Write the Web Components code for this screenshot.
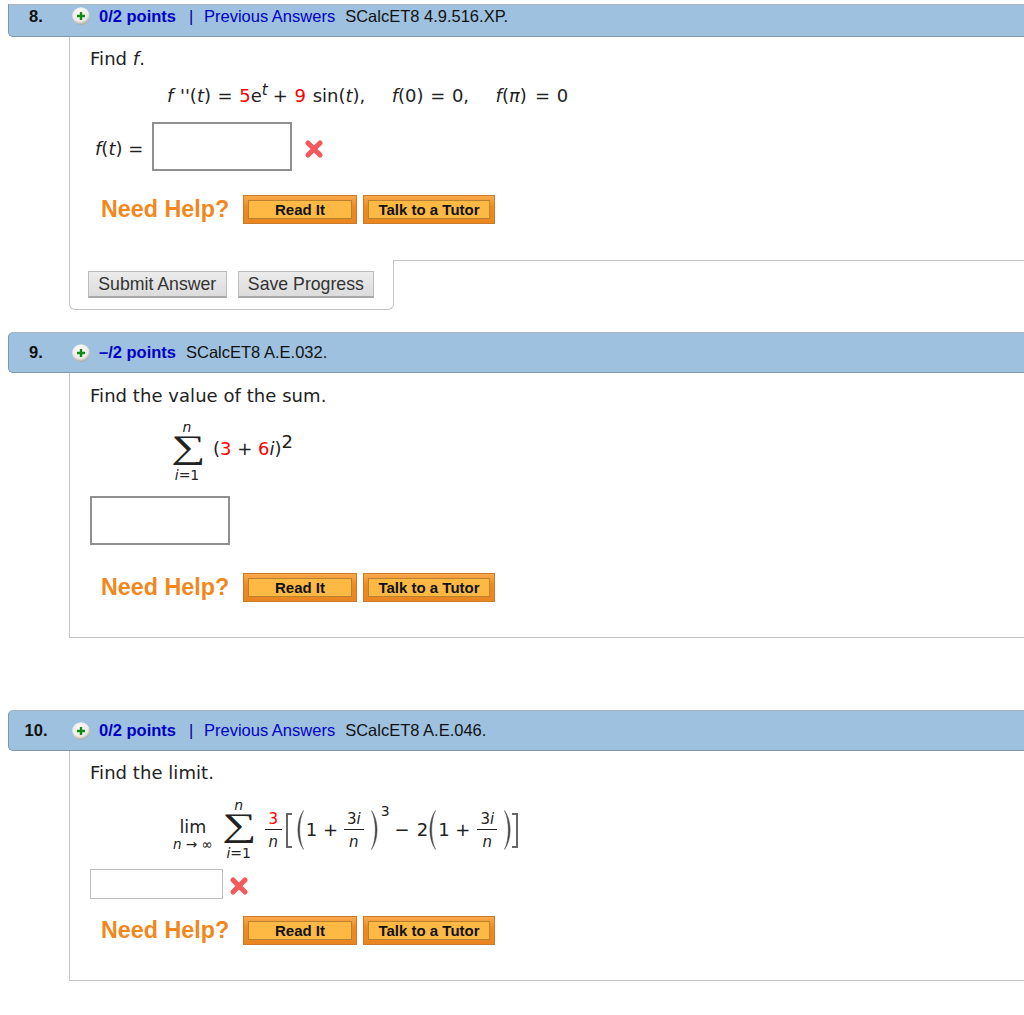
<!DOCTYPE html>
<html>
<head>
<meta charset="utf-8">
<title>Questions</title>
<style>
  html, body { margin: 0; padding: 0; background: #fff; overflow: hidden; }
  body { width: 1024px; height: 1015px; padding-top: 4px; box-sizing: border-box; font-family: "DejaVu Sans", Verdana, sans-serif; font-size: 18px; color: #222; }
  i { font-style: italic; }
  .red { color: #f00; }
  .row { display: flex; align-items: center; }
  .find { height: 22px; line-height: 22px; letter-spacing: .05px; }
  sup { line-height: 0; }
</style>
</head>
<body>

<question-block num="8." points="0/2 points" prev book="SCalcET8 4.9.516.XP." head="33" body-height="223" notch>
  <div class="find" style="margin-top:11px">Find <i>f</i>.</div>
  <div style="margin:15px 0 0 77px;height:22px;line-height:22px;white-space:nowrap;word-spacing:.9px"><i>f</i>&nbsp;''(<i>t</i>) = <span class="red">5</span>e<sup style="font-size:15px;font-style:italic;margin-right:-1.5px">t</sup>&nbsp;+ <span class="red">9</span> sin(<i>t</i>),&nbsp;&nbsp;&nbsp; <i>f</i>(0) = 0,&nbsp;&nbsp;&nbsp; <i>f</i>(<i>π</i>)<span style="margin-left:1.5px"> = 0</span></div>
  <div class="row" style="margin:15px 0 0 5px">
    <span style="width:57px;margin-top:3px;white-space:nowrap"><i>f</i>(<i>t</i>) =</span>
    <answer-box w="140" h="49"></answer-box>
    <wrong-mark style="margin:4px 0 0 12px"></wrong-mark>
  </div>
  <need-help style="margin-top:23px"></need-help>
  <gray-button slot="actions">Submit Answer</gray-button>
  <gray-button slot="actions">Save Progress</gray-button>
</question-block>

<question-block num="9." points="–/2 points" book="SCalcET8 A.E.032." head="41" body-height="265" style="margin-top:22px">
  <div class="find" style="margin-top:12px">Find the value of the sum.</div>
  <div class="row" style="margin:13px 0 0 82px">
    <math-sum></math-sum>
    <span style="margin:-6px 0 0 11px;white-space:nowrap">(<span class="red">3</span> + <span class="red">6</span><i>i</i>)<sup style="font-size:18px">2</sup></span>
  </div>
  <answer-box w="140" h="49" style="margin-top:13px"></answer-box>
  <need-help style="margin-top:27px"></need-help>
</question-block>

<question-block num="10." points="0/2 points" prev book="SCalcET8 A.E.046." head="41" body-height="230" style="margin-top:72px">
  <div class="find" style="margin-top:11px">Find the limit.</div>
  <div class="row" style="margin:14px 0 0 83px">
    <math-lim></math-lim>
    <math-sum style="margin-left:11px"></math-sum>
    <math-frac style="margin:2px 0 0 11px"><span class="red" slot="top">3</span><i slot="bottom">n</i></math-frac>
    <big-bracket style="margin-left:4px"></big-bracket>
    <big-paren style="margin-left:3px"></big-paren>
    <span style="margin-left:1px">1 +</span>
    <math-frac style="margin:2px 0 0 6px"><span slot="top">3<i>i</i></span><i slot="bottom">n</i></math-frac>
    <big-paren right style="margin-left:6px"></big-paren>
    <span style="font-size:14px;margin:-38px 0 0 1px">3</span>
    <span style="margin-left:5px">−</span>
    <span style="margin-left:7px">2</span>
    <big-paren style="margin-left:-1px"></big-paren>
    <span style="margin-left:1px">1 +</span>
    <math-frac style="margin:2px 0 0 7px"><span slot="top">3<i>i</i></span><i slot="bottom">n</i></math-frac>
    <big-paren right style="margin-left:6px"></big-paren>
    <big-bracket right style="margin-left:-1px"></big-bracket>
  </div>
  <div class="row" style="margin-top:8px">
    <answer-box w="133" h="30" thin></answer-box>
    <wrong-mark style="margin:4px 0 0 6px"></wrong-mark>
  </div>
  <need-help style="margin-top:16px"></need-help>
</question-block>

<script>
function define(name, html, init) {
    const tpl = document.createElement('template');
    tpl.innerHTML = html;
    customElements.define(name, class extends HTMLElement {
        constructor() {
            super();
            this.attachShadow({ mode: 'open' });
            this.shadowRoot.appendChild(tpl.content.cloneNode(true));
        }
        connectedCallback() {
            if (init) init(this, this.shadowRoot);
        }
    });
}

define('question-block', `
    <style>
        :host { display: block; margin-left: 8px; width: 1030px; }
        header {
            display: flex; align-items: center; box-sizing: border-box;
            background: #9dc1de; border: 1px solid #7f97ab; border-right: 0;
            border-top-color: #a9b4bd;
            border-radius: 5px 0 0 5px;
            font: 16.5px "Liberation Sans", Arial, sans-serif; color: #111;
        }
        :host([notch]) header { padding-bottom: 9px; border-top-left-radius: 0; }
        .num { width: 63px; padding-right: 9px; text-align: center; box-sizing: border-box; font-weight: bold; color: #111; }
        .pts { font-weight: bold; color: #0000c4; margin-left: 9px; }
        .bar { color: #0000a0; margin-left: 13px; }
        .prev { color: #0000c4; margin-left: 10.7px; }
        .book { margin-left: 10px; }
        .body { display: flow-root; margin-left: 61px; box-sizing: border-box; border-left: 1px solid #c4c4c4; padding-left: 20px; }
        :host(:not([notch])) .body { border-bottom: 1px solid #c4c4c4; }
        .foot { display: none; margin-left: 61px; height: 50px; }
        :host([notch]) .foot { display: flex; }
        .actions {
            width: 325px; box-sizing: border-box; display: flex; gap: 11px;
            padding: 11px 0 0 18px;
            border: 1px solid #c4c4c4; border-top: 0; border-radius: 0 0 6px 6px;
        }
        .rest { flex: 1; border-top: 1px solid #c4c4c4; }
    </style>
    <header>
        <span class="num"></span>
        <plus-badge></plus-badge>
        <span class="pts"></span>
        <span class="bar">|</span>
        <span class="prev">Previous Answers</span>
        <span class="book"></span>
    </header>
    <div class="body"><slot></slot></div>
    <div class="foot">
        <div class="actions"><slot name="actions"></slot></div>
        <div class="rest"></div>
    </div>
`, (el, root) => {
    root.querySelector('header').style.height = el.getAttribute('head') + 'px';
    root.querySelector('.body').style.height = el.getAttribute('body-height') + 'px';
    root.querySelector('.num').textContent = el.getAttribute('num');
    root.querySelector('.pts').textContent = el.getAttribute('points');
    root.querySelector('.book').textContent = el.getAttribute('book');
    if (!el.hasAttribute('prev')) {
        root.querySelector('.bar').remove();
        root.querySelector('.prev').remove();
    }
});

define('plus-badge', `
    <style>:host { display: block; width: 18px; height: 18px; flex: none; } svg { display: block; }</style>
    <svg width="18" height="18" viewBox="0 0 18 18">
        <defs><radialGradient id="g" cx="45%" cy="35%" r="65%"><stop offset="0" stop-color="#fff"/><stop offset=".7" stop-color="#eceae6"/><stop offset="1" stop-color="#aaa79f"/></radialGradient></defs>
        <circle cx="9" cy="9" r="8.8" fill="url(#g)"/>
        <path d="M9 5v8M5 9h8" stroke="#0f8a12" stroke-width="2.4"/>
    </svg>
`);

define('answer-box', `
    <style>
        :host { display: block; box-sizing: border-box; background: #fff; border: 2px solid #909090; flex: none; }
        :host([thin]) { border: 1px solid #bdbdbd; }
    </style>
`, el => {
    el.style.width = el.getAttribute('w') + 'px';
    el.style.height = el.getAttribute('h') + 'px';
});

define('wrong-mark', `
    <style>:host { display: block; width: 20px; height: 20px; flex: none; } svg { display: block; }</style>
    <svg width="20" height="20" viewBox="0 0 20 20"><path d="M4 4L16 16M16 4L4 16" stroke="#f25a5e" stroke-width="5.2" stroke-linecap="round"/></svg>
`);

define('need-help', `
    <style>
        :host { display: flex; align-items: center; margin-left: 11px; height: 30px; font-family: "Liberation Sans", Arial, sans-serif; }
        .label { width: 142px; font-size: 23.3px; font-weight: bold; color: #f2871c; white-space: nowrap; }
        .btns { display: flex; gap: 6px; }
    </style>
    <span class="label">Need Help?</span>
    <div class="btns">
        <help-button style="width:114px">Read It</help-button>
        <help-button style="width:132px">Talk to a Tutor</help-button>
    </div>
`);

define('help-button', `
    <style>
        :host { display: block; box-sizing: border-box; height: 29px; padding: 4px; background: linear-gradient(#f9a94c, #ee8a22 40%, #ea8620); border: 1px solid #c97a2a; }
        div {
            height: 100%; box-sizing: border-box; display: flex; align-items: center; justify-content: center;
            background: #fdb944; border: 1px solid #b8822f;
            font: bold 15px "Liberation Sans", Arial, sans-serif; color: #111;
        }
    </style>
    <div><slot></slot></div>
`);

define('gray-button', `
    <style>
        :host {
            display: block; box-sizing: border-box; height: 27px; padding: 0 9.3px; white-space: nowrap;
            background: linear-gradient(#ececec, #dcdcdc); border: 1px solid #bcbcbc; border-bottom: 2px solid #a8a8a8;
            font: 17.7px/24px "Liberation Sans", Arial, sans-serif; color: #333;
        }
    </style>
    <slot></slot>
`);

define('math-sum', `
    <style>
        :host { display: flex; flex-direction: column; align-items: center; width: 30px; flex: none; font-size: 14px; }
        i { height: 14px; line-height: 14px; }
        b { font: normal 40px/30px "Liberation Serif", serif; height: 30px; transform: translate(1px, -2px) scale(1.2, .82); }
        span { line-height: 15px; margin-top: 4px; white-space: nowrap; }
    </style>
    <i>n</i><b>∑</b><span><i>i</i>=1</span>
`);

define('math-lim', `
    <style>
        :host { display: flex; flex-direction: column; align-items: center; flex: none; margin-top: 10px; font-size: 17.5px; }
        .lim { line-height: 20px; }
        .sub { font-size: 13.5px; line-height: 15px; white-space: nowrap; }
    </style>
    <span class="lim">lim</span>
    <span class="sub"><i>n</i> → ∞</span>
`);

define('math-frac', `
    <style>
        :host { display: flex; flex-direction: column; align-items: center; flex: none; font-size: 15px; }
        div { padding: 0 3px; line-height: 20px; min-width: 11px; text-align: center; }
        .top { border-bottom: 1px solid #222; }
        .bottom { padding-top: 2px; }
    </style>
    <div class="top"><slot name="top"></slot></div>
    <div class="bottom"><slot name="bottom"></slot></div>
`);

define('big-paren', `
    <style>:host { display: block; width: 10px; height: 40px; flex: none; } svg { display: block; }</style>
    <svg width="10" height="40" viewBox="0 0 10 40"><path d="M8.5 .5C1 11 1 29 8.5 39.5C3.4 29 3.4 11 8.5 .5Z" fill="#444" stroke="#555" stroke-width=".5"/></svg>
`, (el, root) => {
    if (el.hasAttribute('right')) root.querySelector('svg').style.transform = 'scaleX(-1)';
});

define('big-bracket', `
    <style>
        :host { display: block; width: 6px; height: 35px; margin-top: 1px; box-sizing: border-box; flex: none; border: 2px solid #666; border-right: 0; }
        :host([right]) { border-right: 2px solid #666; border-left: 0; }
    </style>
`);
</script>
</body>
</html>
